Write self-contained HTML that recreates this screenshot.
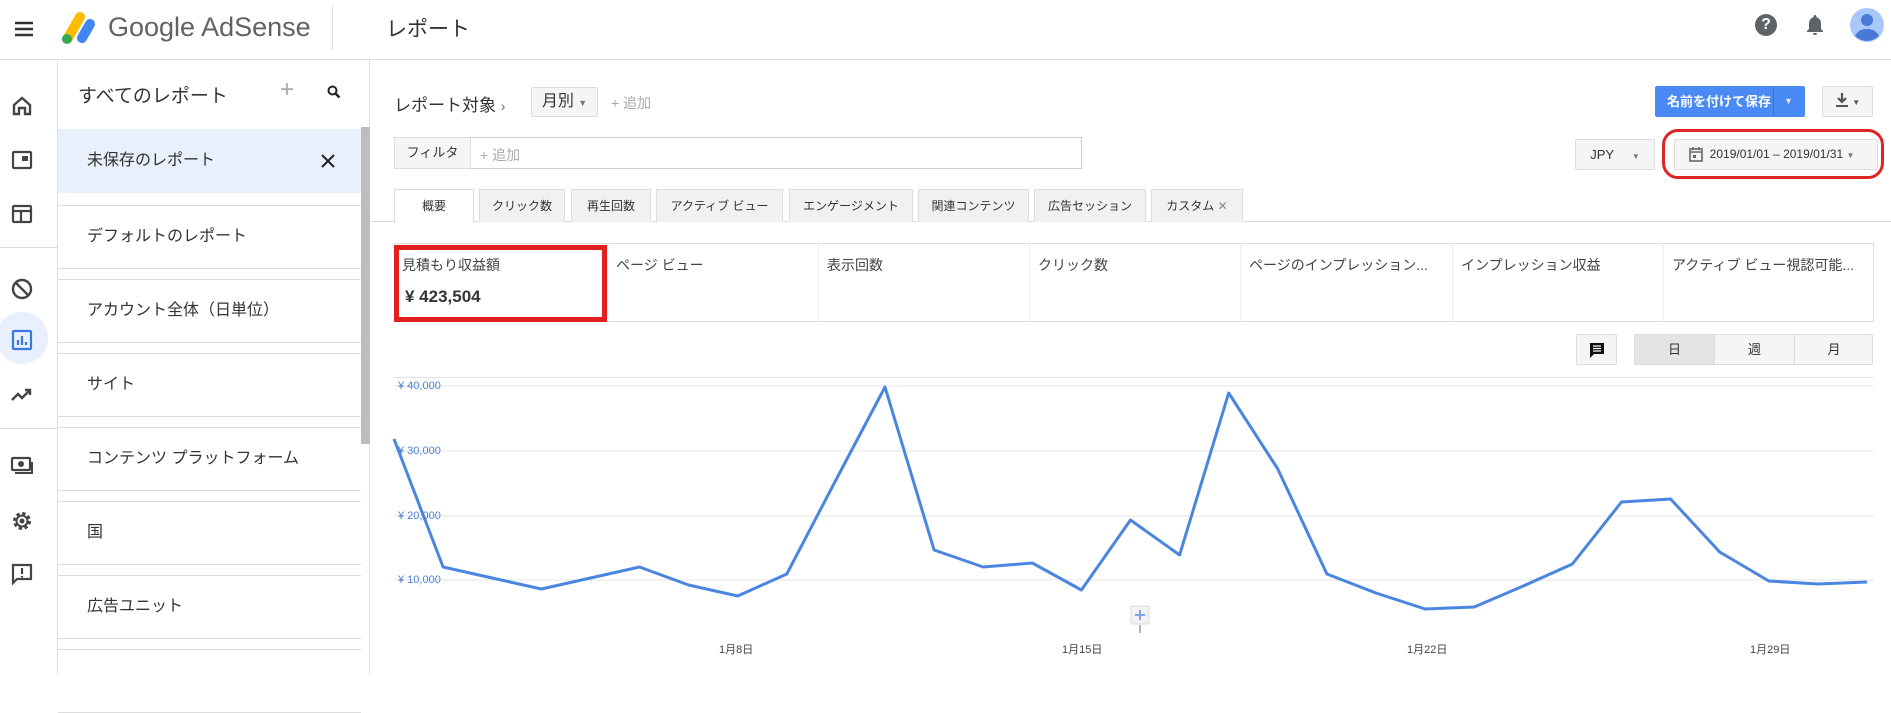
<!DOCTYPE html>
<html><head><meta charset="utf-8"><style>
*{box-sizing:border-box;margin:0;padding:0}
body{width:1891px;height:675px;overflow:hidden;background:#fff;font-family:"Liberation Sans","Noto Sans CJK JP",sans-serif;color:#333;position:relative}
.a{position:absolute}
.hdr{left:0;top:0;width:1891px;height:60px;border-bottom:1px solid #ddd}
.rail{left:0;top:60px;width:58px;height:615px;border-right:1px solid #e0e0e0}
.panel{left:58px;top:60px;width:312px;height:615px;border-right:1px solid #ddd}
.item{position:absolute;left:0;width:303px;height:64px;border-top:1px solid #ddd;border-bottom:1px solid #ddd;font-size:16px;color:#333;padding-left:29px;line-height:62px}
.btn{position:absolute;background:#f5f5f5;border:1px solid #ddd;border-radius:2px;font-size:12px;text-align:center}
.tab{position:absolute;top:189px;height:33px;background:#f1f1f1;border:1px solid #ddd;border-bottom:none;font-size:12px;line-height:32px;text-align:center;color:#333}
.mt{position:absolute;top:243px;height:78px;font-size:14px;color:#444;padding:12px 0 0 8px;white-space:nowrap}
.yl{position:absolute;left:398px;font-size:11px;color:#4a7fd0}
.xl{position:absolute;top:641px;font-size:11px;color:#444}
</style></head><body>
<div class="a hdr"></div>
<svg class="a" style="left:12px;top:17px" width="24" height="24" viewBox="0 0 24 24"><path d="M3 6h18M3 12h18M3 18h18" stroke="#333" stroke-width="2.6"/></svg>
<svg class="a" style="left:58px;top:10px" width="42" height="36" viewBox="0 0 42 36"><line x1="10" y1="28" x2="22" y2="7" stroke="#fbbc04" stroke-width="10" stroke-linecap="round"/><line x1="24" y1="28" x2="32" y2="14" stroke="#4285f4" stroke-width="10" stroke-linecap="round"/><circle cx="9" cy="29" r="5" fill="#34a853"/></svg>
<div class="a" style="left:108px;top:12px;font-size:27px;color:#5f6368">Google AdSense</div>
<div class="a" style="left:332px;top:5px;width:1px;height:45px;background:#ddd"></div>
<div class="a" style="left:386px;top:13px;font-size:21px;color:#333">レポート</div>
<div class="a" style="left:1755px;top:14px;width:22px;height:22px;border-radius:50%;background:#5f6368;color:#fff;font-size:16px;font-weight:bold;text-align:center;line-height:22px">?</div>
<svg class="a" style="left:1805px;top:13px" width="20" height="24" viewBox="0 0 20 24"><path d="M10 2c-1 0-1.5.7-1.5 1.5v.7C5.6 5 4 7.5 4 10.5V16l-2 2v1h16v-1l-2-2v-5.5c0-3-1.6-5.5-4.5-6.3v-.7C11.5 2.7 11 2 10 2zM8 20a2 2 0 0 0 4 0z" fill="#5f6368"/></svg>
<svg class="a" style="left:1850px;top:8px" width="34" height="34" viewBox="0 0 34 34"><circle cx="17" cy="17" r="17" fill="#a8c7fa"/><circle cx="17" cy="12" r="6" fill="#4879d9"/><path d="M5 28c3-6 8-7 12-7s9 1 12 7a17 17 0 0 1-24 0z" fill="#4879d9"/></svg>

<div class="a rail"></div>
<div class="a" style="left:0;top:247px;width:58px;height:1px;background:#ddd"></div>
<div class="a" style="left:0;top:428px;width:58px;height:1px;background:#ddd"></div>
<div class="a" style="left:-4px;top:312px;width:52px;height:52px;border-radius:50%;background:#e8f0fe"></div>
<svg class="a" style="left:10px;top:94px" width="24" height="24" viewBox="0 0 24 24"><path d="M12 4L4 11v9h5v-6h6v6h5v-9z" fill="none" stroke="#444" stroke-width="2.4"/></svg>
<svg class="a" style="left:10px;top:148px" width="24" height="24" viewBox="0 0 24 24"><rect x="3" y="4" width="18" height="16" rx="1" fill="none" stroke="#444" stroke-width="2.2"/><rect x="12" y="8" width="6" height="5" fill="#444"/></svg>
<svg class="a" style="left:10px;top:202px" width="24" height="24" viewBox="0 0 24 24"><rect x="3" y="4" width="18" height="16" rx="1" fill="none" stroke="#444" stroke-width="2.2"/><path d="M3 9h18M11 9v11" stroke="#444" stroke-width="2.2"/></svg>
<svg class="a" style="left:10px;top:277px" width="24" height="24" viewBox="0 0 24 24"><circle cx="12" cy="12" r="9" fill="none" stroke="#444" stroke-width="2.4"/><path d="M5.5 5.5l13 13" stroke="#444" stroke-width="2.4"/></svg>
<svg class="a" style="left:10px;top:328px" width="24" height="24" viewBox="0 0 24 24"><rect x="3" y="3" width="18" height="18" rx="1" fill="none" stroke="#3b78e7" stroke-width="2.2"/><path d="M8 17v-5M12 17V8M16 17v-3" stroke="#3b78e7" stroke-width="2.2"/></svg>
<svg class="a" style="left:10px;top:383px" width="24" height="24" viewBox="0 0 24 24"><path d="M2 17l6-6 4 4 8-8M15 7h5v5" fill="none" stroke="#444" stroke-width="2.4"/></svg>
<svg class="a" style="left:10px;top:453px" width="24" height="24" viewBox="0 0 24 24"><rect x="2" y="5" width="18" height="12" rx="1" fill="none" stroke="#444" stroke-width="2.2"/><circle cx="11" cy="11" r="3" fill="#444"/><path d="M5 20h17V9" fill="none" stroke="#444" stroke-width="2"/></svg>
<svg class="a" style="left:10px;top:509px" width="24" height="24" viewBox="0 0 24 24"><circle cx="12" cy="12" r="7" fill="none" stroke="#444" stroke-width="4" stroke-dasharray="3 2.5"/><circle cx="12" cy="12" r="5.5" fill="none" stroke="#444" stroke-width="2"/><circle cx="12" cy="12" r="2.5" fill="#444"/></svg>
<svg class="a" style="left:10px;top:562px" width="24" height="24" viewBox="0 0 24 24"><path d="M3 3h18v14H7l-4 4z" fill="none" stroke="#444" stroke-width="2.2"/><path d="M12 6v6M12 14v1.5" stroke="#444" stroke-width="2.2"/></svg>

<div class="a panel">
<div class="a" style="left:20px;top:21px;font-size:19px;color:#333">すべてのレポート</div>
<div class="a" style="left:222px;top:16px;font-size:24px;color:#aaa">+</div>
<svg class="a" style="left:268px;top:24px" width="16" height="16" viewBox="0 0 16 16"><circle cx="6.5" cy="6.5" r="4" fill="none" stroke="#222" stroke-width="2"/><path d="M9.5 9.5l4 4" stroke="#222" stroke-width="2.4"/></svg>
<div class="item" style="top:69px;height:64px;background:#e8f0fb;border-color:#e8f0fb">未保存のレポート</div>
<svg class="a" style="left:262px;top:93px" width="16" height="16" viewBox="0 0 16 16"><path d="M2 2l12 12M14 2L2 14" stroke="#222" stroke-width="2"/></svg>
<div class="item" style="top:145px">デフォルトのレポート</div>
<div class="item" style="top:219px">アカウント全体（日単位）</div>
<div class="item" style="top:293px">サイト</div>
<div class="item" style="top:367px">コンテンツ プラットフォーム</div>
<div class="item" style="top:441px">国</div>
<div class="item" style="top:515px">広告ユニット</div>
<div class="item" style="top:589px"></div>
<div class="a" style="left:303px;top:67px;width:9px;height:317px;background:#bdbdbd"></div>
</div>

<div class="a" style="left:394px;top:91px;font-size:17px;color:#333">レポート対象 <span style="font-size:14px;color:#666">›</span></div>
<div class="btn" style="left:531px;top:87px;width:67px;height:30px;font-size:16px;line-height:28px;color:#333">月別 <span style="font-size:9px;color:#777">▼</span></div>
<div class="a" style="left:611px;top:93px;font-size:14px;color:#aaa">+ 追加</div>
<div class="a" style="left:1655px;top:86px;width:150px;height:31px;background:#4a8af4;border-radius:2px;color:#fff;font-size:13px;font-weight:bold;line-height:31px;padding-left:12px">名前を付けて保存</div>
<div class="a" style="left:1773px;top:86px;width:1px;height:31px;background:#3a74d8"></div>
<div class="a" style="left:1784px;top:86px;color:#dce8fd;font-size:9px;line-height:31px">▼</div>
<div class="btn" style="left:1822px;top:86px;width:51px;height:31px;line-height:29px;color:#555"><svg style="vertical-align:-3px" width="14" height="16" viewBox="0 0 14 16"><path d="M7 1v9M3 6l4 4 4-4" fill="none" stroke="#555" stroke-width="2.2"/><path d="M1 14h12" stroke="#555" stroke-width="2"/></svg> <span style="font-size:8px">▼</span></div>
<div class="a" style="left:394px;top:137px;width:688px;height:32px;border:1px solid #ccc"></div>
<div class="btn" style="left:394px;top:137px;width:77px;height:32px;line-height:30px;font-size:13px;color:#333">フィルタ</div>
<div class="a" style="left:480px;top:145px;font-size:14px;color:#aaa">+ 追加</div>
<div class="btn" style="left:1575px;top:139px;width:80px;height:31px;line-height:29px;color:#333;font-size:13px">JPY &nbsp;&nbsp;&nbsp;&nbsp;<span style="font-size:8px;color:#777">▼</span></div>
<div class="btn" style="left:1674px;top:139px;width:204px;height:31px;line-height:29px;color:#333;font-size:12px;text-align:left;padding-left:14px">
<svg style="vertical-align:-4px" width="14" height="16" viewBox="0 0 14 16"><rect x="1" y="3" width="12" height="12" fill="none" stroke="#666" stroke-width="1.6"/><path d="M1 6h12M4 1v3M10 1v3" stroke="#666" stroke-width="1.6"/><rect x="4" y="9" width="3" height="3" fill="#666"/></svg>&nbsp; 2019/01/01 – 2019/01/31 <span style="font-size:8px;color:#777">▼</span></div>
<div class="a" style="left:1662px;top:129px;width:222px;height:50px;border:3px solid #e02424;border-radius:16px"></div>

<div class="a" style="left:371px;top:221px;width:1520px;height:1px;background:#ddd"></div>
<div class="tab" style="left:394px;width:80px;background:#fff;height:34px">概要</div>
<div class="tab" style="left:479px;width:86px">クリック数</div>
<div class="tab" style="left:571px;width:80px">再生回数</div>
<div class="tab" style="left:656px;width:127px">アクティブ ビュー</div>
<div class="tab" style="left:789px;width:124px">エンゲージメント</div>
<div class="tab" style="left:918px;width:111px">関連コンテンツ</div>
<div class="tab" style="left:1034px;width:112px">広告セッション</div>
<div class="tab" style="left:1151px;width:92px">カスタム <span style="color:#888">✕</span></div>

<div class="a" style="left:394px;top:243px;width:1480px;height:79px;border:1px solid #ddd;border-left:none"></div>
<div class="mt" style="left:394px;width:213px">見積もり収益額<div style="font-size:17px;font-weight:bold;color:#333;margin-top:12px;padding-left:3px">¥ 423,504</div></div>
<div class="mt" style="left:607px;border-left:1px solid #eee">ページ ビュー</div>
<div class="mt" style="left:818px;border-left:1px solid #eee">表示回数</div>
<div class="mt" style="left:1029px;border-left:1px solid #eee">クリック数</div>
<div class="mt" style="left:1240px;border-left:1px solid #eee">ページのインプレッション...</div>
<div class="mt" style="left:1452px;border-left:1px solid #eee">インプレッション収益</div>
<div class="mt" style="left:1663px;border-left:1px solid #eee">アクティブ ビュー視認可能...</div>
<div class="a" style="left:394px;top:245px;width:213px;height:77px;border:5px solid #e0201f"></div>

<div class="btn" style="left:1576px;top:334px;width:41px;height:31px"><svg style="margin-top:6px" width="18" height="18" viewBox="0 0 18 18"><path d="M2 2h14v11H6l-4 4z" fill="#111"/><path d="M5 5h8M5 7.5h8M5 10h8" stroke="#fff" stroke-width="1.2"/></svg></div>
<div class="btn" style="left:1634px;top:334px;width:239px;height:31px;background:#f5f5f5"></div>
<div class="a" style="left:1635px;top:335px;width:79px;height:29px;background:#e4e4e4;text-align:center;line-height:29px;font-size:13px">日</div>
<div class="a" style="left:1714px;top:335px;width:1px;height:29px;background:#ddd"></div>
<div class="a" style="left:1715px;top:335px;width:79px;text-align:center;line-height:29px;font-size:13px">週</div>
<div class="a" style="left:1794px;top:335px;width:1px;height:29px;background:#ddd"></div>
<div class="a" style="left:1795px;top:335px;width:78px;text-align:center;line-height:29px;font-size:13px">月</div>

<div class="a" style="left:394px;top:377px;width:1480px;height:1px;background:#e3e3e3"></div>
<svg class="a" style="left:0;top:0" width="1891" height="675" id="ch">
<g stroke="#e6e6e6" stroke-width="1"><line x1="394" y1="386" x2="1874" y2="386"/><line x1="394" y1="451" x2="1874" y2="451"/><line x1="394" y1="516" x2="1874" y2="516"/><line x1="394" y1="580" x2="1874" y2="580"/></g>
<line x1="1140" y1="625" x2="1140" y2="633" stroke="#666"/>
<rect x="1131" y="606" width="18" height="18" fill="#f3f3f3" stroke="#ddd"/><path d="M1140 610v10M1135 615h10" stroke="#7da3e6" stroke-width="2"/>
<polyline id="pl" fill="none" stroke="#4a86e0" stroke-width="3" stroke-linejoin="round"/>
</svg>
<div class="yl" style="top:380px">¥ 40,000</div>
<div class="yl" style="top:445px">¥ 30,000</div>
<div class="yl" style="top:510px">¥ 20,000</div>
<div class="yl" style="top:574px">¥ 10,000</div>
<div class="xl" style="left:719px">1月8日</div>
<div class="xl" style="left:1062px">1月15日</div>
<div class="xl" style="left:1407px">1月22日</div>
<div class="xl" style="left:1750px">1月29日</div>
<script>
var ys=[439,567,578,589,578,567,585,596,574,480,387,550,567,563,590,520,555,393,469,574,593,609,607,586,564,502,499,552,581,584,582];
var p=ys.map(function(y,i){return (394+i*49.1).toFixed(1)+","+y}).join(" ");
document.getElementById("pl").setAttribute("points",p);
</script>
</body></html>
